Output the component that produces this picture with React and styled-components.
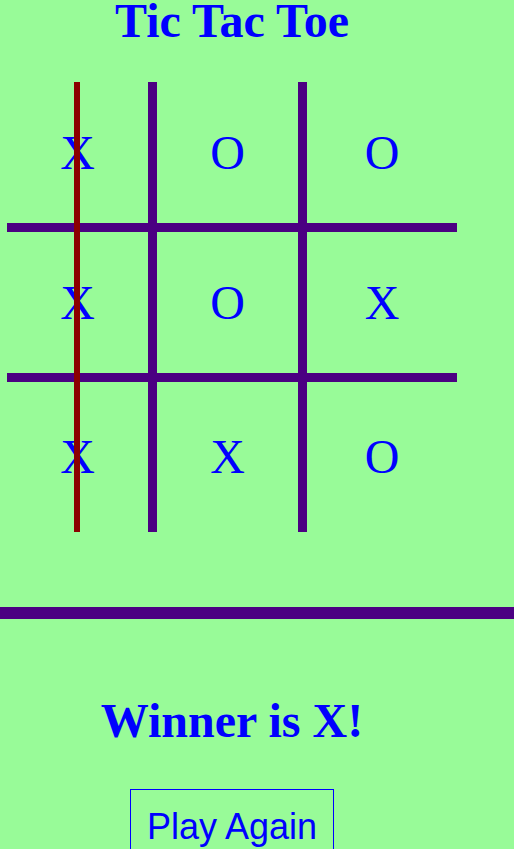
import React, { useState } from 'react';
import styled, { createGlobalStyle } from 'styled-components';

const GlobalStyle = createGlobalStyle`
  html, body {
    margin: 0;
    padding: 0;
    background: #98fb98;
    overflow: hidden;
  }
`;

const Page = styled.div`
  width: 514px;
  min-height: 849px;
  background: #98fb98;
  color: #0000ff;
  font-family: 'Liberation Serif', 'Times New Roman', serif;
`;

const Column = styled.div`
  width: 450px;
  margin-left: 7px;
  display: flex;
  flex-direction: column;
  align-items: center;
`;

const Title = styled.h1`
  margin: 0;
  font-size: 48px;
  line-height: 42px;
  font-weight: bold;
  text-align: center;
`;

const Board = styled.div`
  position: relative;
  margin-top: 40px;
  display: grid;
  grid-template-columns: repeat(3, 150px);
  grid-template-rows: repeat(3, 150px);
`;

const Cell = styled.div`
  box-sizing: border-box;
  display: flex;
  align-items: center;
  justify-content: center;
  font-size: 48px;
  line-height: 1;
  cursor: pointer;
  border-right: ${(p) => (p.$right ? '9px solid #4b0082' : 'none')};
  border-bottom: ${(p) => (p.$bottom ? '9px solid #4b0082' : 'none')};
`;

const WinLine = styled.div`
  position: absolute;
  top: 0;
  width: 6px;
  height: 100%;
  background: #8b0000;
  pointer-events: none;
`;

const Divider = styled.div`
  height: 12px;
  margin-top: 75px;
  background: #4b0082;
`;

const Winner = styled.h2`
  margin: 74px 0 0;
  font-size: 48px;
  line-height: 56px;
  font-weight: bold;
  text-align: center;
`;

const Button = styled.button`
  margin-top: 40px;
  padding: 16px;
  background: transparent;
  border: 1px solid #0000ff;
  color: #0000ff;
  font-family: 'Liberation Sans', Arial, sans-serif;
  font-size: 36px;
  cursor: pointer;
`;

const start = ['X', 'O', 'O', 'X', 'O', 'X', 'X', 'X', 'O'];

const lines = [
  [0, 1, 2], [3, 4, 5], [6, 7, 8],
  [0, 3, 6], [1, 4, 7], [2, 5, 8],
  [0, 4, 8], [2, 4, 6],
];

const findWinner = (squares) => {
  for (let i = 0; i < lines.length; i++) {
    const [a, b, c] = lines[i];
    if (squares[a] && squares[a] === squares[b] && squares[a] === squares[c]) {
      return { player: squares[a], index: i };
    }
  }
  return null;
};

const App = () => {
  const [squares, setSquares] = useState(start);
  const win = findWinner(squares);

  // only columns need a line for this board
  const col = win && win.index >= 3 && win.index <= 5 ? win.index - 3 : null;

  return (
    <Page>
      <GlobalStyle />
      <Column>
        <Title>Tic Tac Toe</Title>
        <Board>
          {squares.map((v, i) => (
            <Cell key={i} $right={i % 3 < 2} $bottom={i < 6}>
              {v}
            </Cell>
          ))}
          {col !== null && <WinLine style={{ left: col * 150 + 67 }} />}
        </Board>
      </Column>
      <Divider />
      <Column>
        {win && <Winner>Winner is {win.player}!</Winner>}
        <Button onClick={() => setSquares(Array(9).fill(null))}>Play Again</Button>
      </Column>
    </Page>
  );
};

export default App;
